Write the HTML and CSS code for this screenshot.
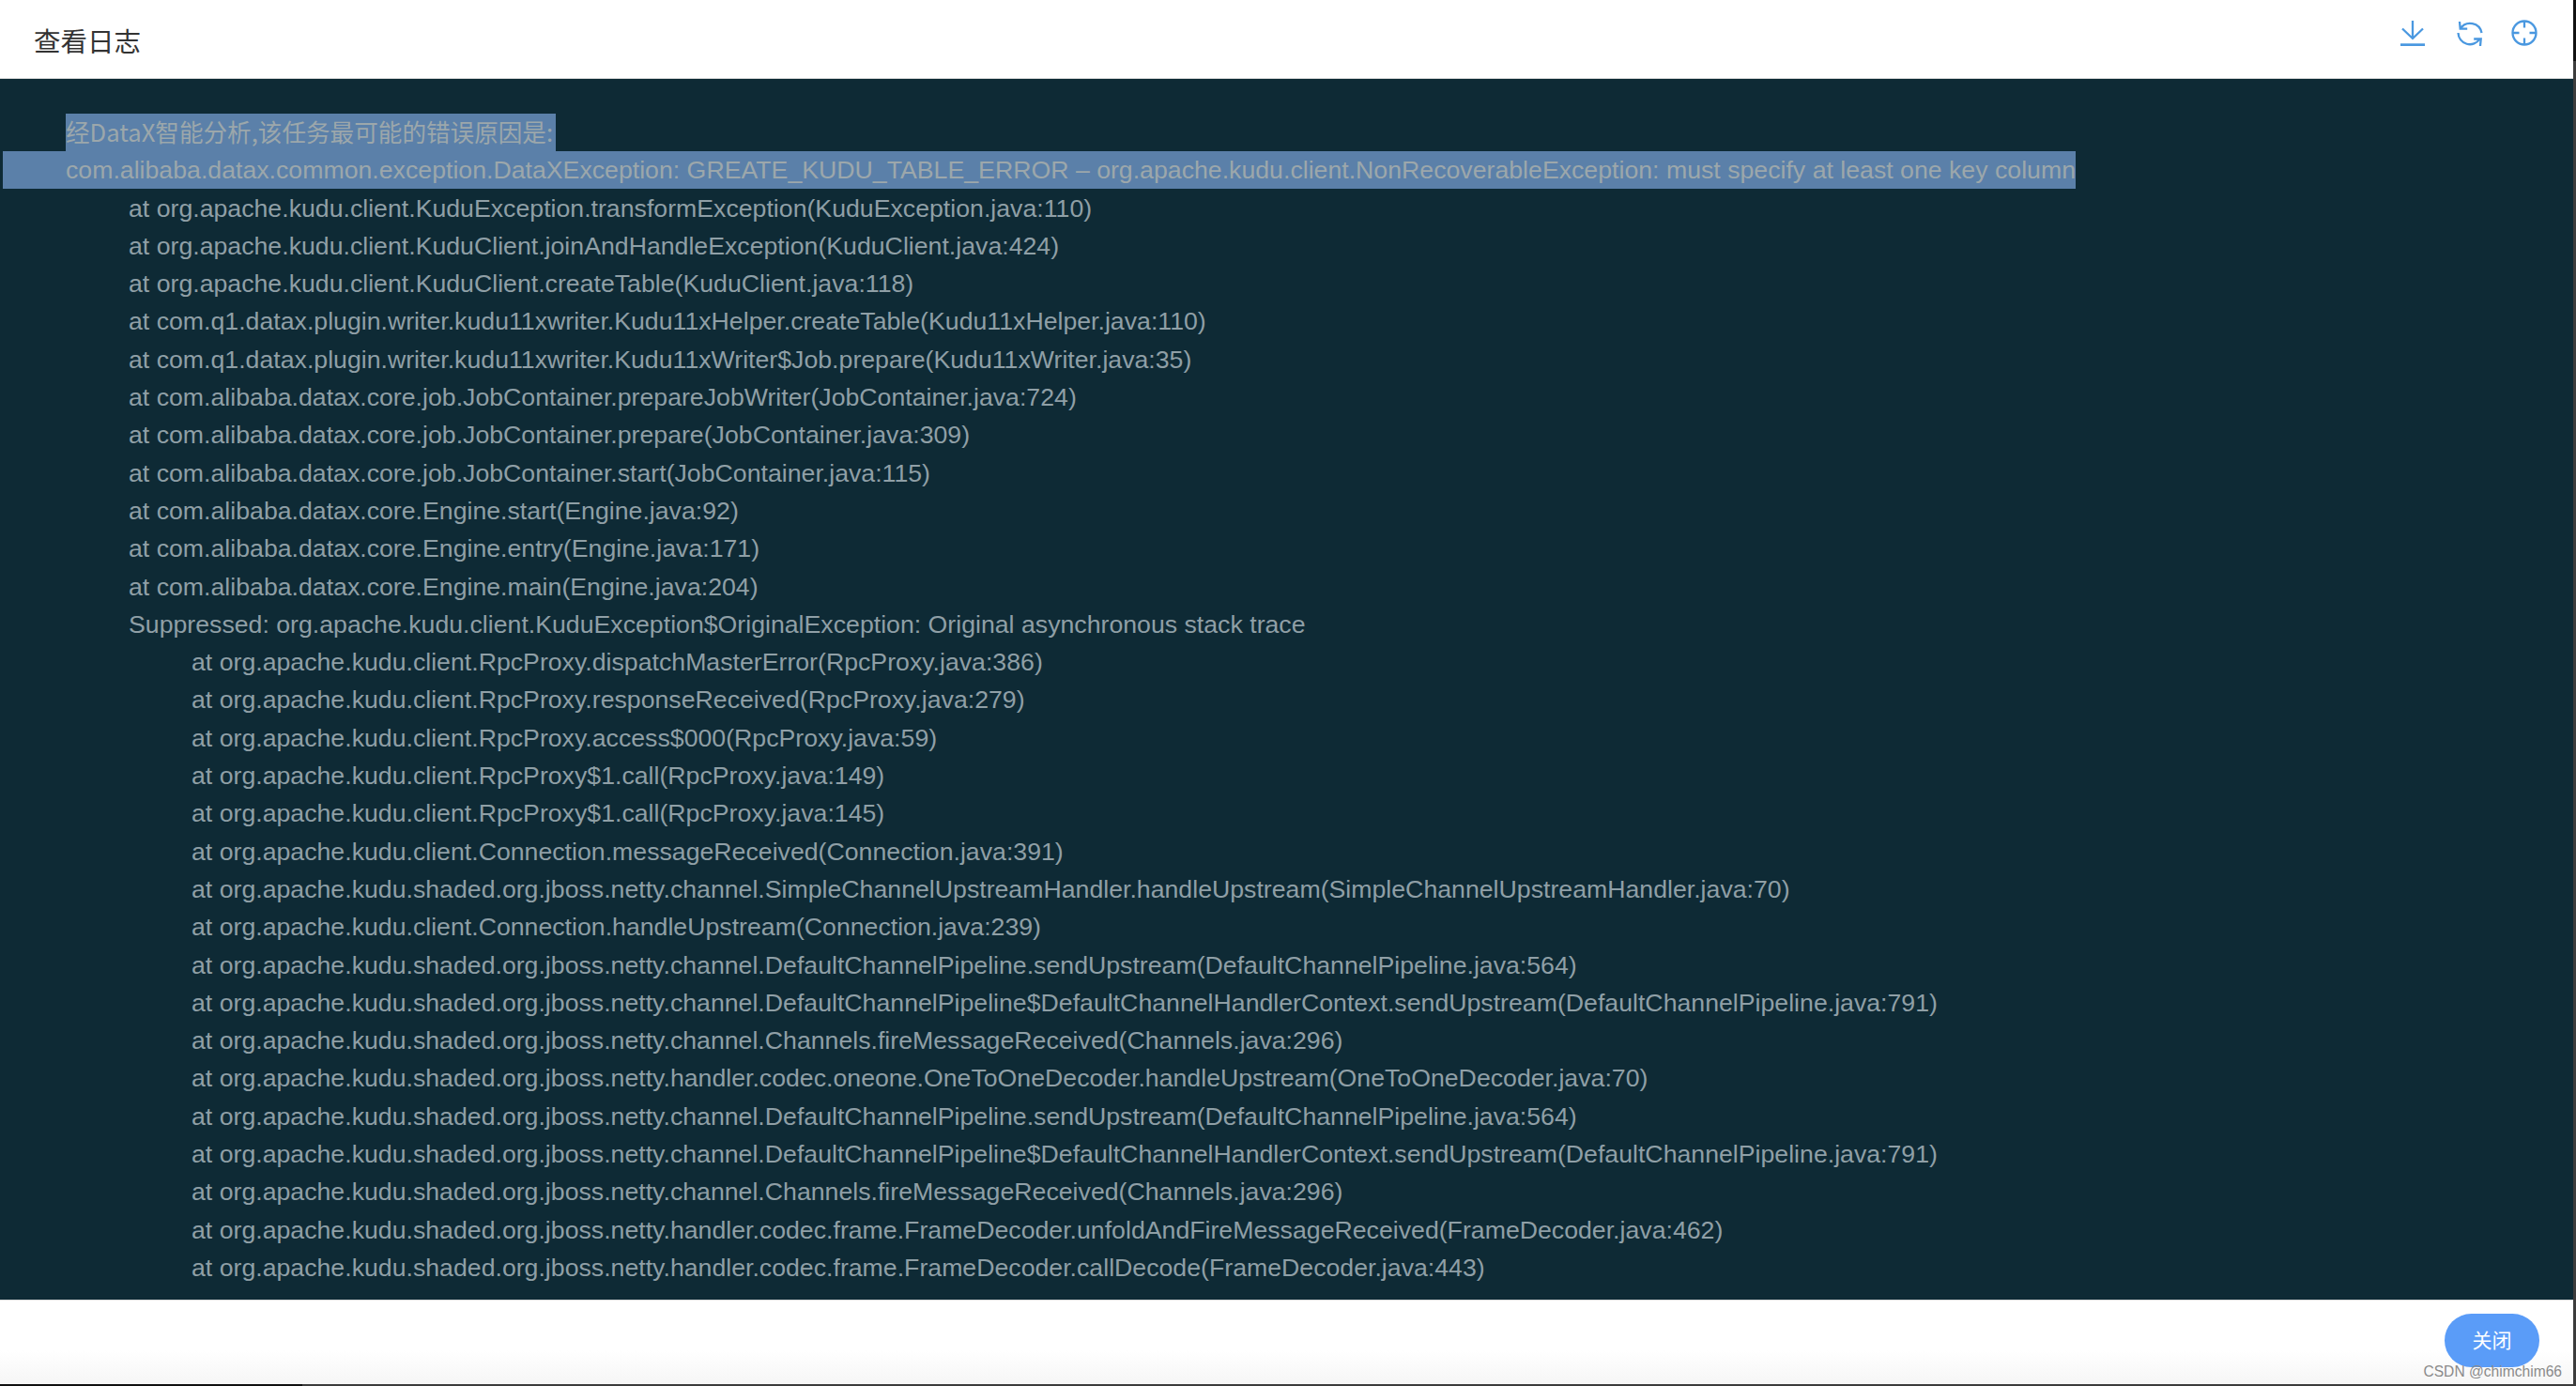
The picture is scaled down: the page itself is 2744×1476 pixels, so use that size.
FILE: index.html
```html
<!DOCTYPE html>
<html lang="zh-CN">
<head>
<meta charset="utf-8">
<title>查看日志</title>
<link rel="stylesheet" href="styles.css">
</head>
<body>
<main class="dialog">
  <header class="dialog-head">
    <h1 class="dialog-title">查看日志</h1>
    <div class="tools">
      <svg class="tool tool-download" viewBox="0 0 28 28" fill="none"><path d="M14 1v19M3 9.500 14 20 25 9.500"/><path class="tool-base" d="M1 26.700h26"/></svg>
      <svg class="tool" viewBox="0 0 28 28" fill="none"><path d="M3.800 9.500A12.500 12.500 0 0 1 26.500 14M1.500 14A12.500 12.500 0 0 0 24.500 20.500M3 2l.7 7.700h7.500M25 28l.7-7.500h-7.500"/></svg>
      <svg class="tool" viewBox="0 0 28 28" fill="none"><circle cx="14" cy="14" r="12.500"/><path d="M14 1.500V8.500M14 19.500v7M1.500 14H8.500M19.500 14h7"/></svg>
    </div>
  </header>
  <section class="log">
    <div class="line cn"><span class="sel">经DataX智能分析,该任务最可能的错误原因是:</span></div>
    <div class="line"><span class="sel sel-wide">com.alibaba.datax.common.exception.DataXException: GREATE_KUDU_TABLE_ERROR – org.apache.kudu.client.NonRecoverableException: must specify at least one key column</span></div>
    <div class="line l1">at org.apache.kudu.client.KuduException.transformException(KuduException.java:110)</div>
    <div class="line l1">at org.apache.kudu.client.KuduClient.joinAndHandleException(KuduClient.java:424)</div>
    <div class="line l1">at org.apache.kudu.client.KuduClient.createTable(KuduClient.java:118)</div>
    <div class="line l1">at com.q1.datax.plugin.writer.kudu11xwriter.Kudu11xHelper.createTable(Kudu11xHelper.java:110)</div>
    <div class="line l1">at com.q1.datax.plugin.writer.kudu11xwriter.Kudu11xWriter$Job.prepare(Kudu11xWriter.java:35)</div>
    <div class="line l1">at com.alibaba.datax.core.job.JobContainer.prepareJobWriter(JobContainer.java:724)</div>
    <div class="line l1">at com.alibaba.datax.core.job.JobContainer.prepare(JobContainer.java:309)</div>
    <div class="line l1">at com.alibaba.datax.core.job.JobContainer.start(JobContainer.java:115)</div>
    <div class="line l1">at com.alibaba.datax.core.Engine.start(Engine.java:92)</div>
    <div class="line l1">at com.alibaba.datax.core.Engine.entry(Engine.java:171)</div>
    <div class="line l1">at com.alibaba.datax.core.Engine.main(Engine.java:204)</div>
    <div class="line l1">Suppressed: org.apache.kudu.client.KuduException$OriginalException: Original asynchronous stack trace</div>
    <div class="line l2">at org.apache.kudu.client.RpcProxy.dispatchMasterError(RpcProxy.java:386)</div>
    <div class="line l2">at org.apache.kudu.client.RpcProxy.responseReceived(RpcProxy.java:279)</div>
    <div class="line l2">at org.apache.kudu.client.RpcProxy.access$000(RpcProxy.java:59)</div>
    <div class="line l2">at org.apache.kudu.client.RpcProxy$1.call(RpcProxy.java:149)</div>
    <div class="line l2">at org.apache.kudu.client.RpcProxy$1.call(RpcProxy.java:145)</div>
    <div class="line l2">at org.apache.kudu.client.Connection.messageReceived(Connection.java:391)</div>
    <div class="line l2">at org.apache.kudu.shaded.org.jboss.netty.channel.SimpleChannelUpstreamHandler.handleUpstream(SimpleChannelUpstreamHandler.java:70)</div>
    <div class="line l2">at org.apache.kudu.client.Connection.handleUpstream(Connection.java:239)</div>
    <div class="line l2">at org.apache.kudu.shaded.org.jboss.netty.channel.DefaultChannelPipeline.sendUpstream(DefaultChannelPipeline.java:564)</div>
    <div class="line l2">at org.apache.kudu.shaded.org.jboss.netty.channel.DefaultChannelPipeline$DefaultChannelHandlerContext.sendUpstream(DefaultChannelPipeline.java:791)</div>
    <div class="line l2">at org.apache.kudu.shaded.org.jboss.netty.channel.Channels.fireMessageReceived(Channels.java:296)</div>
    <div class="line l2">at org.apache.kudu.shaded.org.jboss.netty.handler.codec.oneone.OneToOneDecoder.handleUpstream(OneToOneDecoder.java:70)</div>
    <div class="line l2">at org.apache.kudu.shaded.org.jboss.netty.channel.DefaultChannelPipeline.sendUpstream(DefaultChannelPipeline.java:564)</div>
    <div class="line l2">at org.apache.kudu.shaded.org.jboss.netty.channel.DefaultChannelPipeline$DefaultChannelHandlerContext.sendUpstream(DefaultChannelPipeline.java:791)</div>
    <div class="line l2">at org.apache.kudu.shaded.org.jboss.netty.channel.Channels.fireMessageReceived(Channels.java:296)</div>
    <div class="line l2">at org.apache.kudu.shaded.org.jboss.netty.handler.codec.frame.FrameDecoder.unfoldAndFireMessageReceived(FrameDecoder.java:462)</div>
    <div class="line l2">at org.apache.kudu.shaded.org.jboss.netty.handler.codec.frame.FrameDecoder.callDecode(FrameDecoder.java:443)</div>
  </section>
  <footer class="dialog-foot">
    <button class="close">关闭</button>
    <span class="mark">CSDN @chimchim66</span>
  </footer>
</main>
<div class="edge-right"></div>
<div class="edge-bottom"></div>
</body>
</html>
```
FILE: styles.css
```css
* { box-sizing: border-box; }
html, body { margin: 0; height: 100%; }
body {
  display: grid;
  grid-template-columns: 2741px 3px;
  grid-template-rows: 1474px 2px;
  overflow: hidden;
  background: #3c3c3c;
  font-family: "Liberation Sans", "Noto Sans CJK SC", sans-serif;
}
.dialog {
  display: flex;
  flex-direction: column;
  background: #fff;
  min-height: 0;
}
.dialog-head {
  flex: 0 0 84px;
  display: flex;
  justify-content: space-between;
  padding: 0 38px 0 36px;
  border-bottom: 1px solid #dcdcdc;
}
.dialog-title {
  margin: 25px 0 0;
  font-size: 28.5px;
  line-height: 36px;
  font-weight: 400;
  color: #333;
  font-family: "Noto Sans CJK SC", sans-serif;
}
.tools {
  display: flex;
  gap: 30px;
  padding-top: 21px;
}
.tool {
  width: 28px;
  height: 28px;
  stroke: #4a98e0;
  stroke-width: 2.3;
}
.tool-download { margin-right: 3px; }
.tool-base { stroke-width: 2.8; }
.log {
  flex: 1;
  min-height: 0;
  overflow: hidden;
  padding: 37px 0 0 70px;
  background: #0e2a35;
  color: #8f9fa6;
  font-size: 26.7px;
  white-space: nowrap;
}
.line {
  height: 40.3px;
  line-height: 40px;
}
.cn { font-size: 25.6px; line-height: 38px; font-family: "Noto Sans CJK SC", sans-serif; }
.l1 { padding-left: 67px; }
.l2 { padding-left: 134px; }
.sel {
  display: block;
  width: fit-content;
  height: 40px;
  background: #5b80a9;
  color: #9ca7ab;
}
.cn .sel { width: 522px; }
.sel-wide {
  margin-left: -67px;
  padding-left: 67px;
}
.dialog-foot {
  flex: 0 0 90px;
  display: flex;
  justify-content: flex-end;
  position: relative;
  padding: 14px 36px 0 0;
  border-top: 1px solid #dcdcdc;
  background: linear-gradient(#fff 60%, #f6f6f6);
}
.close {
  width: 101px;
  height: 57px;
  padding: 0 0 3px;
  border: 0;
  border-radius: 29px;
  background: #5a9cf8;
  color: #fff;
  font: 21px "Noto Sans CJK SC", sans-serif;
}
.mark {
  position: absolute;
  right: 12px;
  bottom: 4px;
  font-size: 15.6px;
  line-height: 18px;
  color: #8a8a8a;
}
.edge-right { background: linear-gradient(#111 65px, #3c3c3c 65px); }
.edge-bottom { grid-column: 1 / -1; background: linear-gradient(90deg, #111 322px, #3c3c3c 322px); }
```
